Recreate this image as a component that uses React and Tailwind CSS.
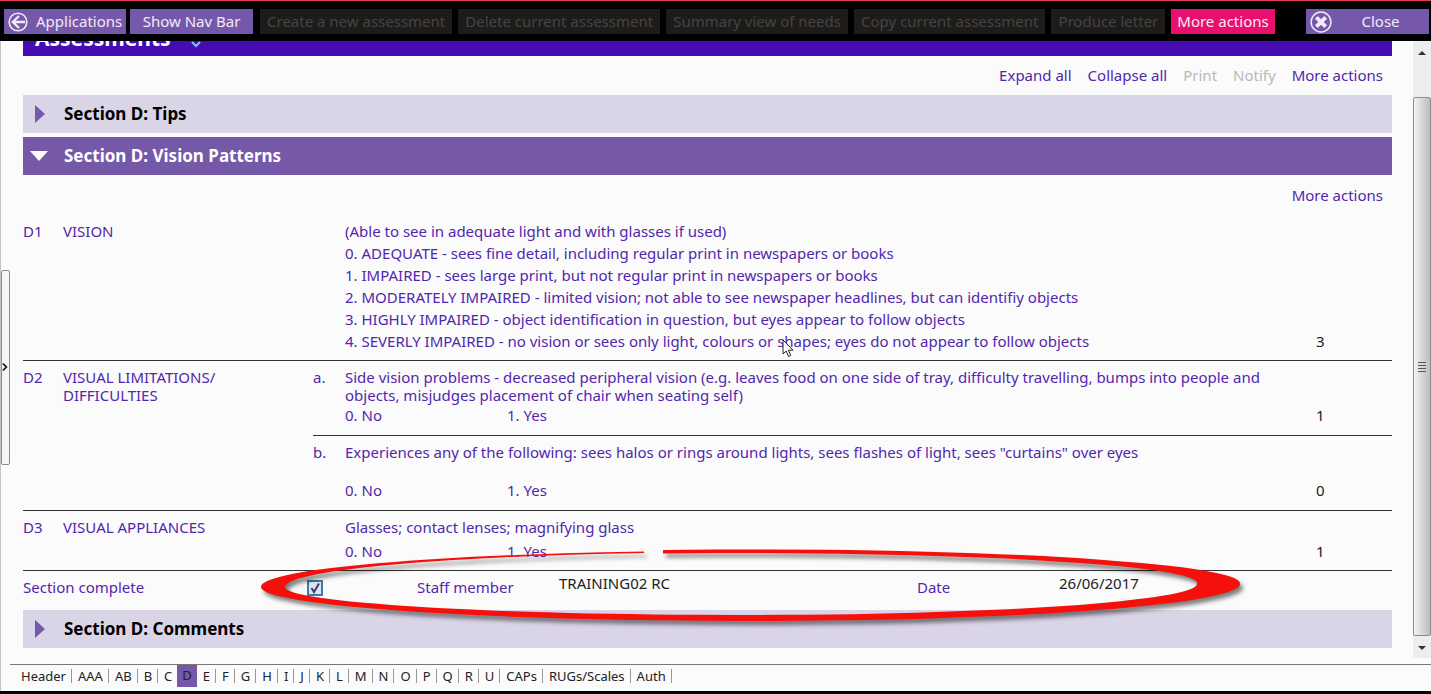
const toolbar = [
  "Create a new assessment",
  "Delete current assessment",
  "Summary view of needs",
  "Copy current assessment",
  "Produce letter",
]

const visionOptions = [
  "(Able to see in adequate light and with glasses if used)",
  "0. ADEQUATE - sees fine detail, including regular print in newspapers or books",
  "1. IMPAIRED - sees large print, but not regular print in newspapers or books",
  "2. MODERATELY IMPAIRED - limited vision; not able to see newspaper headlines, but can identifiy objects",
  "3. HIGHLY IMPAIRED - object identification in question, but eyes appear to follow objects",
  "4. SEVERLY IMPAIRED - no vision or sees only light, colours or shapes; eyes do not appear to follow objects",
]

const tabs = [
  "Header", "AAA", "AB", "B", "C", "D", "E", "F", "G", "H", "I", "J", "K", "L", "M",
  "N", "O", "P", "Q", "R", "U", "CAPs", "RUGs/Scales", "Auth",
]

function TopBar(){
  return(
    <header className="flex h-[41px] items-start border-t border-[#e0405c] bg-black pt-2 pr-0.5 pl-1">
      <button className="flex h-[25px] w-[122px] items-center gap-2 bg-[#7658aa] pl-1 text-[#f1eaf8]">
        <svg className="size-5" viewBox="0 0 20 20" fill="none" stroke="currentColor">
          <circle cx="10" cy="10" r="8.8" strokeWidth="1.6"/>
          <path d="M17 10H5M11 4L4.8 10l6.2 6" strokeWidth="2.4"/>
        </svg>
        Applications
      </button>
      <button className="ml-1 h-[25px] w-[123px] bg-[#7658aa] text-[#f1eaf8]">Show Nav Bar</button>
      <div className="ml-[7px] flex gap-1.5">
        {toolbar.map((name)=>
          <button key={name} disabled className="h-[25px] bg-[#1d1c1a] px-[7px] text-[#454443]">{name}</button>
        )}
        <button className="h-[25px] bg-[#e8106e] px-1.5 text-[#fdeaf3]">More actions</button>
      </div>
      <button className="ml-auto flex h-[25px] w-[123px] items-center bg-[#7658aa] pl-1 text-[#f1eaf8]">
        <svg className="size-[22px]" viewBox="0 0 20 20" fill="none" stroke="currentColor">
          <circle cx="10" cy="10" r="9" strokeWidth="1.4"/>
          <path d="M5.8 5.8l8.4 8.4M14.2 5.8l-8.4 8.4" strokeWidth="3.6"/>
        </svg>
        <span className="flex-1 text-center">Close</span>
      </button>
    </header>
  )
}

function SectionBar({title, open}){
  return(
    <button
      aria-expanded={open}
      className={open
        ? "flex h-[38px] w-full items-center bg-[#7658a8] text-[17px] font-bold text-white"
        : "flex h-[38px] w-full items-center bg-[#dad4e7] text-[17px] font-bold text-black"}
    >
      <svg className="mr-4 ml-[7px] size-[18px]" viewBox="0 0 18 18">
        {open
          ? <path d="M0 4h18l-9 10z" fill="#fff"/>
          : <path d="M5 0v18l10-9z" fill="#7658a8"/>
        }
      </svg>
      {title}
    </button>
  )
}

function YesNo(){
  return(
    <div className="flex leading-[22px]">
      <span className="w-[162px]">0. No</span>
      <span>1. Yes</span>
    </div>
  )
}

function Score({value}){
  return <div className="w-[76px] shrink-0 self-end leading-[22px] text-[#222]">{value}</div>
}

function Questions(){
  return(
    <>
      <div className="flex border-b border-[#333] pt-[5px] pb-2 leading-[22px]">
        <div className="w-10 shrink-0">D1</div>
        <div className="w-[282px] shrink-0">VISION</div>
        <div className="flex-1">
          {visionOptions.map((e)=> <div key={e}>{e}</div>)}
        </div>
        <Score value="3"/>
      </div>
      <div className="flex border-b border-[#333] leading-[18px]">
        <div className="w-10 shrink-0 pt-[7px]">D2</div>
        <div className="w-[250px] shrink-0 pt-[7px]">VISUAL LIMITATIONS/<br/>DIFFICULTIES</div>
        <div className="flex-1">
          <div className="flex border-b border-[#333] pt-[7px] pb-[9px]">
            <div className="w-8 shrink-0">a.</div>
            <div className="flex-1">
              <p className="pr-8">Side vision problems - decreased peripheral vision (e.g. leaves food on one side of tray, difficulty travelling, bumps into people and objects, misjudges placement of chair when seating self)</p>
              <YesNo/>
            </div>
            <Score value="1"/>
          </div>
          <div className="flex pt-[7px] pb-[9px]">
            <div className="w-8 shrink-0">b.</div>
            <div className="flex-1">
              <p className="mb-[18px]">Experiences any of the following: sees halos or rings around lights, sees flashes of light, sees "curtains" over eyes</p>
              <YesNo/>
            </div>
            <Score value="0"/>
          </div>
        </div>
      </div>
      <div className="flex border-b border-[#333] pt-[7px] pb-2 leading-[18px]">
        <div className="w-10 shrink-0">D3</div>
        <div className="w-[282px] shrink-0">VISUAL APPLIANCES</div>
        <div className="flex-1">
          <p className="mb-1">Glasses; contact lenses; magnifying glass</p>
          <YesNo/>
        </div>
        <Score value="1"/>
      </div>
    </>
  )
}

function RedRing(){
  return(
    <svg className="pointer-events-none absolute -top-7 left-[232px] h-[88px] w-[1000px]" viewBox="255 543 1000 88">
      <path
        className="drop-shadow-[3px_4px_2px_rgba(0,0,0,0.5)]"
        fill="#f5100c"
        d="M663 550A489 34 0 0 1 1240 583.5A489 37 0 0 1 750 621A489 34 0 0 1 261 587A489 36 0 0 1 644 551.5V553A456 35 0 0 0 285 587.5A456 28 0 0 0 741 615A456 31 0 0 0 1197 584A456 30 0 0 0 663 553.5Z"
      />
    </svg>
  )
}

function SectionComplete(){
  return(
    <div className="relative flex h-[39px] items-start pt-1">
      <label htmlFor="complete" className="w-[284px] leading-6">Section complete</label>
      <span className="relative mt-[5px] size-4">
        <input id="complete" type="checkbox" defaultChecked className="block size-4 appearance-none border-2 border-[#3f7aa8] bg-[#dde6f0]"/>
        <svg className="pointer-events-none absolute inset-0 size-4" viewBox="0 0 16 16" fill="none" stroke="#3a3a78" strokeWidth="2">
          <path d="M4.5 8l2.5 4 5-8.5"/>
        </svg>
      </span>
      <span className="ml-[94px] w-[142px] leading-6">Staff member</span>
      <span className="w-[358px] leading-4 text-[#222]">TRAINING02 RC</span>
      <span className="w-[142px] leading-6">Date</span>
      <span className="leading-4 text-[#222]">26/06/2017</span>
      <RedRing/>
    </div>
  )
}

function ScrollBar(){
  return(
    <div className="mb-1.5 flex w-[18px] flex-col items-center bg-[#ededed] pt-2">
      <svg className="h-2 w-2" viewBox="0 0 8 8"><path d="M0 6l4-4 4 4z" fill="#333"/></svg>
      <div className="mt-10 mb-2 flex w-full flex-1 flex-col items-center justify-center gap-0.5 rounded-xs border border-[#8c8c8c] bg-linear-to-r from-[#f4f4f4] to-[#bcbcbc]">
        <i className="h-px w-2 bg-[#555]"/>
        <i className="h-px w-2 bg-[#555]"/>
        <i className="h-px w-2 bg-[#555]"/>
        <i className="h-px w-2 bg-[#555]"/>
      </div>
      <svg className="mb-1.5 h-2 w-2" viewBox="0 0 8 8"><path d="M0 2l4 4 4-4z" fill="#333"/></svg>
    </div>
  )
}

export default function App(){
  return(
    <div className="relative flex min-h-screen flex-col border-r border-[#e8d48a] bg-[#fbfbfb] font-['Noto_Sans',sans-serif] text-[15px] text-[#5127ad]">
      <TopBar/>
      <div className="flex flex-1 border-b-3 border-black">
        <div className="flex w-2.5 items-center border-l border-[#c4c4c4] pt-0.5">
          <button aria-label="Show panel" className="flex h-[195px] w-[9px] items-center rounded-xs border border-[#8c8c8c] bg-[#f6f6f6]">
            <svg className="h-2.5 w-2" viewBox="0 0 8 10" fill="none" stroke="#111" strokeWidth="2"><path d="M1 1l4 4-4 4"/></svg>
          </button>
        </div>
        <div className="flex flex-1 flex-col">
          <div className="flex flex-1">
            <main className="flex-1 pr-[21px] pb-4 pl-[13px]">
              <div className="flex h-[15px] items-end overflow-hidden bg-[#460cb2] pl-3 text-[21px] font-bold text-white">
                <h1 className="leading-9">Assessments</h1>
                <svg className="mb-2 ml-5 h-2.5 w-2.5" viewBox="0 0 10 10" fill="none" stroke="#7fc4e8" strokeWidth="2"><path d="M1 4l4 4 4-4"/></svg>
              </div>
              <div className="flex h-[39px] items-center justify-end gap-4 pr-[9px]">
                <button>Expand all</button>
                <button>Collapse all</button>
                <button disabled className="text-[#b9b8b6]">Print</button>
                <button disabled className="text-[#b9b8b6]">Notify</button>
                <button>More actions</button>
              </div>
              <SectionBar title="Section D: Tips" open={false}/>
              <div className="h-1"/>
              <SectionBar title="Section D: Vision Patterns" open={true}/>
              <div className="flex h-10 items-center justify-end pr-[9px]">
                <button>More actions</button>
              </div>
              <Questions/>
              <SectionComplete/>
              <SectionBar title="Section D: Comments" open={false}/>
            </main>
            <ScrollBar/>
          </div>
          <nav className="flex h-[27px] items-start border-t border-[#777] pl-[5px] text-[13px] text-[#222]">
            {tabs.map((t)=>
              t == "D"
              ? <button key={t} className="-ml-px h-[22px] bg-[#7658a8] px-[5px]">{t}</button>
              : <button key={t} className="flex h-[22px] items-center pl-1.5">
                  <span className="h-3.5 border-r border-[#999] pr-[5px] leading-3.5">{t}</span>
                </button>
            )}
          </nav>
        </div>
      </div>
      <svg className="pointer-events-none absolute top-[339px] left-[782px] h-[19px] w-3" viewBox="0 0 12 19">
        <path d="M1 1v14l3.2-3 2.3 5.5 2.2-1-2.3-5.3H11z" fill="#fff" stroke="#222"/>
      </svg>
    </div>
  )
}
